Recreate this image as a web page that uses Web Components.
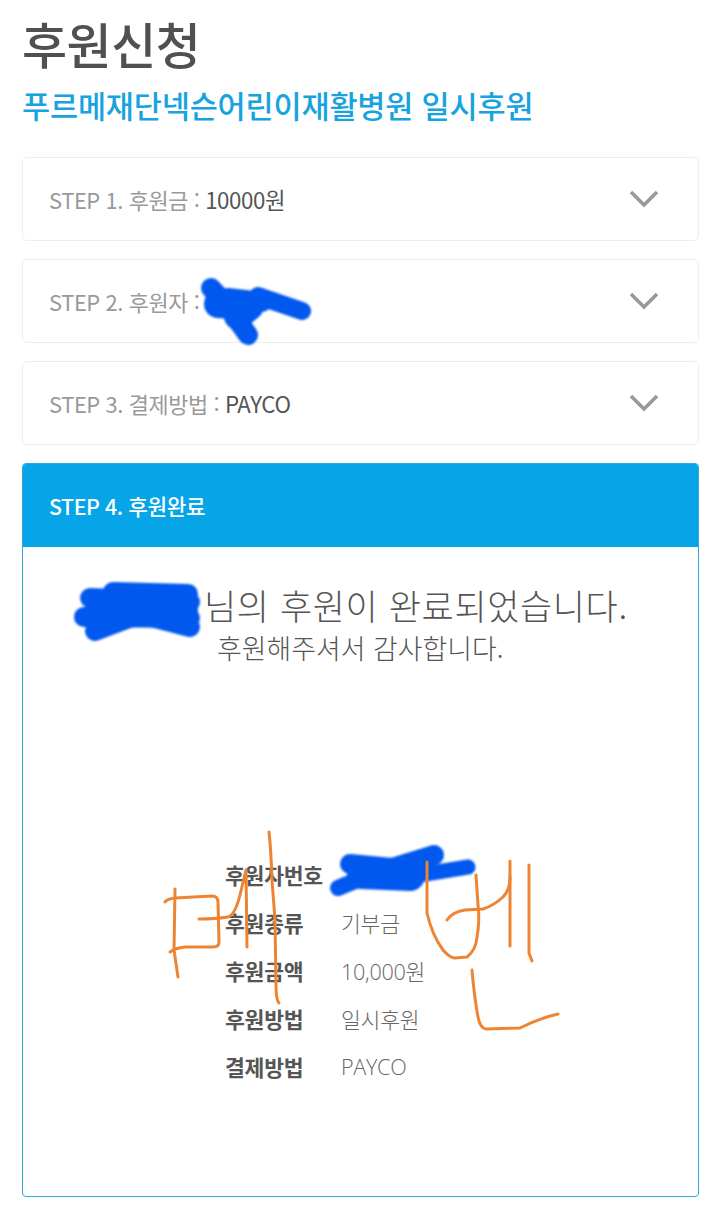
<!DOCTYPE html>
<html lang="ko">
<head>
<meta charset="utf-8">
<title>후원신청</title>
<style>
    html, body { margin: 0; background: #fff; }
    body { font-family: "Noto Sans CJK KR", "Noto Sans", sans-serif; }
</style>
</head>
<body>
<donate-page>
    <page-title slot="title" heading="후원신청" sub="푸르메재단넥슨어린이재활병원 일시후원"></page-title>
    <step-card label="STEP 1. 후원금 : " value="10000원"></step-card>
    <step-card label="STEP 2. 후원자 : "></step-card>
    <step-card label="STEP 3. 결제방법 : " value="PAYCO"></step-card>
    <done-card>
        <span slot="head">STEP 4. 후원완료</span>
        <info-row name="후원자번호"></info-row>
        <info-row name="후원종류" value="기부금"></info-row>
        <info-row name="후원금액" value="10,000원"></info-row>
        <info-row name="후원방법" value="일시후원"></info-row>
        <info-row name="결제방법" value="PAYCO"></info-row>
    </done-card>
</donate-page>
<scribble-layer></scribble-layer>

<script>
class DonatePage extends HTMLElement {
    constructor() {
        super()
        this.attachShadow({mode: 'open'}).innerHTML = `
        <style>
            :host { display: block; }
            #wrap { display: flex; flex-direction: column; gap: 18px; padding: 0 21px 26px 22px; }
        </style>
        <slot name="title"></slot>
        <div id="wrap"><slot></slot></div>`
    }
}

class PageTitle extends HTMLElement {
    constructor() {
        super()
        this.attachShadow({mode: 'open'}).innerHTML = `
        <style>
            :host { display: block; padding: 12px 0 0 22px; height: 157px; box-sizing: border-box; }
            h1 { margin: 0; font-size: 49px; line-height: 62px; font-weight: 500; color: #505050; letter-spacing: -0.5px; }
            h2 { margin: 0; font-size: 30.6px; line-height: 62px; font-weight: 500; color: #17a3df; letter-spacing: -0.2px; white-space: nowrap; }
        </style>
        <h1>${this.getAttribute('heading')}</h1>
        <h2>${this.getAttribute('sub')}</h2>`
    }
}

class StepCard extends HTMLElement {
    constructor() {
        super()
        this.attachShadow({mode: 'open'}).innerHTML = `
        <style>
            :host { display: block; }
            #box {
                display: flex; align-items: center; justify-content: space-between;
                height: 84px; box-sizing: border-box; padding: 0 39px 0 26px;
                border: 1px solid #eee; border-radius: 5px;
                font-size: 21.9px; letter-spacing: -0.4px; color: #999;
            }
            b { font-size: 22.3px; font-weight: 400; color: #555; }
            svg { display: block; }
        </style>
        <div id="box">
            <span>${this.getAttribute('label')}<b>${this.getAttribute('value') || ''}</b></span>
            <svg width="30" height="20" viewBox="0 0 30 20"><path d="M2 3 L15 16 L28 3" fill="none" stroke="#999" stroke-width="3.6"/></svg>
        </div>`
    }
}

class DoneCard extends HTMLElement {
    constructor() {
        super()
        this.attachShadow({mode: 'open'}).innerHTML = `
        <style>
            :host { display: block; }
            #box { border: 1px solid #2fa8dc; border-radius: 4px; overflow: hidden; height: 734px; box-sizing: border-box; }
            #head {
                height: 83px; box-sizing: border-box; padding-left: 26px; display: flex; align-items: center;
                background: #05a5e8; color: #fff; font-size: 21.3px; font-weight: 500; letter-spacing: -0.4px;
            }
            #msg { color: #555; padding-top: 33px; }
            #msg p { margin: 0; }
            #big { font-size: 35px; line-height: 50px; font-weight: 300; padding-left: 181px; white-space: nowrap; letter-spacing: 0.6px; }
            #small { font-size: 26.9px; line-height: 36px; font-weight: 300; padding-left: 194px; white-space: nowrap; }
            #rows { display: flex; flex-direction: column; padding: 184px 0 0 202px; }
        </style>
        <div id="box">
            <div id="head"><slot name="head"></slot></div>
            <div id="msg">
                <p id="big">님의 후원이 완료되었습니다.</p>
                <p id="small">후원해주셔서 감사합니다.</p>
            </div>
            <div id="rows"><slot></slot></div>
        </div>`
    }
}

class InfoRow extends HTMLElement {
    constructor() {
        super()
        this.attachShadow({mode: 'open'}).innerHTML = `
        <style>
            :host { display: flex; align-items: center; height: 48px; letter-spacing: -0.3px; }
            b { width: 116px; flex: none; font-size: 21.6px; font-weight: 700; color: #555; white-space: nowrap; }
            span { font-family: "Open Sans", "Noto Sans CJK KR", sans-serif; font-size: 21.6px; color: #666; font-weight: 300; }
        </style>
        <b>${this.getAttribute('name')}</b><span>${this.getAttribute('value') || ''}</span>`
    }
}

// pen marks drawn over the screenshot, these sit on top of the content
class ScribbleLayer extends HTMLElement {
    constructor() {
        super()
        this.attachShadow({mode: 'open'}).innerHTML = `
        <style>
            :host { position: absolute; left: 0; top: 0; width: 720px; height: 1223px; pointer-events: none; }
            svg { display: block; }
            .blue { fill: none; stroke: #0558ee; stroke-linecap: round; stroke-linejoin: round; }
            .orange { fill: none; stroke: #ee8431; stroke-width: 3; stroke-linecap: round; stroke-linejoin: round; }
        </style>
        <svg width="720" height="1223" viewBox="0 0 720 1223">
            <filter id="soft"><feGaussianBlur stdDeviation="0.8"/></filter>
            <g class="blue" filter="url(#soft)">
                <path stroke-width="20" d="M211 288 L226 304 L248 335"/>
                <path stroke-width="28" d="M218 304 L250 306 L238 316"/>
                <path stroke-width="18" d="M258 296 L302 311"/>
                <path stroke-width="20" d="M228 298 L262 302"/>
                <path stroke-width="20" d="M113 592 L188 594"/>
                <path stroke-width="20" d="M90 598 L190 602"/>
                <path stroke-width="20" d="M84 617 L190 618"/>
                <path stroke-width="20" d="M95 631 L140 614 L190 627"/>
                <path stroke-width="20" d="M112 606 L188 610"/>
                <path stroke-width="20" d="M350 864 L392 868 L434 855"/>
                <path stroke-width="16" d="M338 888 L362 878"/>
                <path stroke-width="30" d="M362 874 L410 876"/>
                <path stroke-width="15" d="M425 874 L468 867"/>
            </g>
            <g class="orange">
                <path d="M269 832 Q271 850 272 880 L275 920 L276 985 Q276 1000 279 1003"/>
                <path d="M165 902 Q167 899 175 898 L212 896 Q218 896 218 902 L219 942 Q219 947 213 947 L185 947 Q175 948 170 952"/>
                <path d="M175 889 L174 950 L178 977"/>
                <path d="M199 919 Q215 919 228 917 Q235 915 240 895 L246 870 L247 947"/>
                <path d="M427 862 L427 913 Q432 935 443 950 Q450 958 455 958 L467 957 Q476 950 477 937 Q480 920 478 905 L476 875"/>
                <path d="M447 920 Q452 912 465 910 L483 909 Q493 906 503 897 Q510 890 510 877"/>
                <path d="M510 861 L510 946"/>
                <path d="M529 865 L529 953 L532 961"/>
                <path d="M472 970 Q474 995 478 1017 Q480 1028 486 1029 L520 1028 Q540 1018 558 1014"/>
            </g>
        </svg>`
    }
}

customElements.define('donate-page', DonatePage)
customElements.define('page-title', PageTitle)
customElements.define('step-card', StepCard)
customElements.define('done-card', DoneCard)
customElements.define('info-row', InfoRow)
customElements.define('scribble-layer', ScribbleLayer)
</script>
</body>
</html>
